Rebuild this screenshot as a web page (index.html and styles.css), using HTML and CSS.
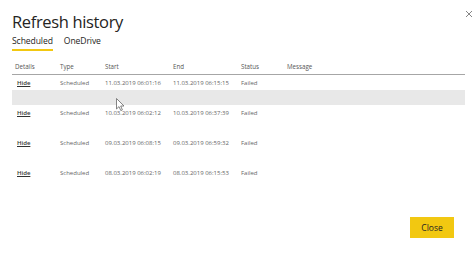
FILE: index.html
```html
<!DOCTYPE html>
<html>
<head>
<meta charset="utf-8">
<link rel="stylesheet" href="styles.css">
</head>
<body>
<div class="dialog">
  <button class="close-x" aria-label="Close">
    <svg width="8" height="8" viewBox="0 0 8 8"><path d="M1 1 L7 7 M7 1 L1 7" stroke="#777" stroke-width="0.9" fill="none"/></svg>
  </button>
  <h1 class="title">Refresh history</h1>
  <div class="tabs">
    <span class="tab active">Scheduled</span>
    <span class="tab">OneDrive</span>
  </div>
  <div class="table">
    <div class="row head">
      <span>Details</span><span>Type</span><span>Start</span><span>End</span><span>Status</span><span>Message</span>
    </div>
    <div class="row">
      <span class="hide">Hide</span><span>Scheduled</span><span>11.03.2019 06:01:16</span><span>11.03.2019 06:15:15</span><span>Failed</span><span></span>
    </div>
    <div class="detail hover"></div>
    <div class="row">
      <span class="hide">Hide</span><span>Scheduled</span><span>10.03.2019 06:02:12</span><span>10.03.2019 06:37:39</span><span>Failed</span><span></span>
    </div>
    <div class="detail"></div>
    <div class="row">
      <span class="hide">Hide</span><span>Scheduled</span><span>09.03.2019 06:08:15</span><span>09.03.2019 06:59:32</span><span>Failed</span><span></span>
    </div>
    <div class="detail"></div>
    <div class="row">
      <span class="hide">Hide</span><span>Scheduled</span><span>08.03.2019 06:02:19</span><span>08.03.2019 06:15:53</span><span>Failed</span><span></span>
    </div>
  </div>
  <div class="footer">
    <button class="btn-close">Close</button>
  </div>
  <svg class="cursor" width="10" height="14" viewBox="0 0 10 14"><path d="M0.5 0.5 L0.5 11 L3 8.6 L4.8 12.6 L6.4 11.9 L4.7 8 L8 8 Z" fill="#fff" stroke="#666" stroke-width="0.8" stroke-linejoin="round"/></svg>
</div>
</body>
</html>
```

FILE: styles.css
```css
* { box-sizing: border-box; }
html, body { margin: 0; padding: 0; background: #fff; }
body { width: 474px; height: 254px; overflow: hidden; }
.dialog {
  position: relative;
  width: 474px;
  height: 254px;
  display: flex;
  flex-direction: column;
  padding: 10px 9px 16px 12px;
  font-family: "Open Sans", "Noto Sans", sans-serif;
  color: #252423;
}
.close-x {
  position: absolute;
  right: 1px;
  top: 10px;
  padding: 0;
  border: 0;
  background: none;
  width: 8px;
  height: 8px;
  display: block;
}
.close-x svg { display: block; }
.title {
  margin: 0;
  font-size: 16.5px;
  font-weight: 400;
  line-height: 24px;
  letter-spacing: -0.35px;
  color: #252423;
}
.tabs {
  display: flex;
  gap: 11px;
  height: 17px;
  margin-top: 0;
}
.tab {
  font-size: 8.6px;
  line-height: 14px;
  color: #252423;
  letter-spacing: -0.1px;
}
.tab.active {
  border-bottom: 2px solid #f2c811;
}
.table {
  margin-top: 8px;
  width: 453px;
  display: flex;
  flex-direction: column;
}
.row {
  display: grid;
  grid-template-columns: 45px 45px 68px 68px 46px 1fr;
  height: 15px;
  align-items: center;
  font-size: 6px;
  color: #666;
}
.row span { padding-left: 3px; white-space: nowrap; }
.row.head {
  height: 16px;
  border-bottom: 1px solid #a6a6a6;
  color: #555;
  font-size: 6.2px;
}
.row .hide {
  padding-left: 5px;
  color: #333;
  font-weight: 600;
  text-decoration: underline;
}
.detail { height: 15px; }
.detail.hover { background: #e8e8e8; }
.footer {
  margin-top: auto;
  display: flex;
  justify-content: flex-end;
  padding-right: 11px;
}
.btn-close {
  width: 44px;
  height: 21px;
  border: 0;
  padding: 0;
  background: #f2c811;
  font-family: "Open Sans", "Noto Sans", sans-serif;
  font-size: 8.5px;
  color: #252423;
}
.cursor {
  position: absolute;
  left: 116px;
  top: 98px;
}
```
